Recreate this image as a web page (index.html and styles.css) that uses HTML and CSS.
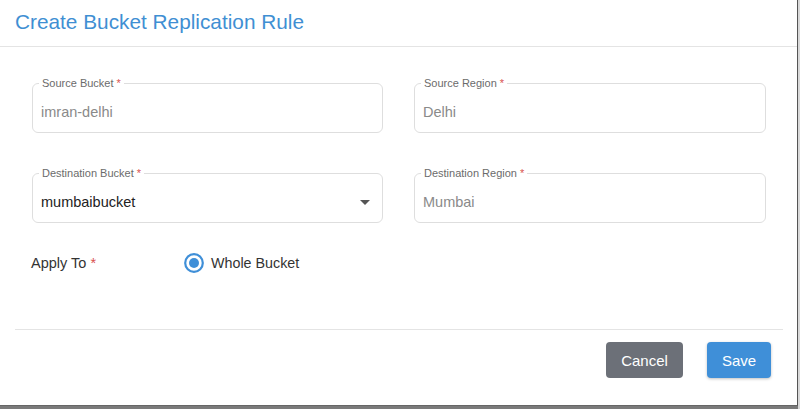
FILE: index.html
```html
<!DOCTYPE html>
<html>
<head>
<meta charset="utf-8">
<link rel="stylesheet" href="styles.css">
</head>
<body>
<div class="dialog">
  <div class="header"><h1 class="title">Create Bucket Replication Rule</h1></div>
  <div class="body">
    <div class="grid">
      <fieldset class="field">
        <legend>Source Bucket <span class="req">*</span></legend>
        <div class="value muted">imran-delhi</div>
      </fieldset>
      <fieldset class="field">
        <legend>Source Region <span class="req">*</span></legend>
        <div class="value muted">Delhi</div>
      </fieldset>
      <fieldset class="field">
        <legend>Destination Bucket <span class="req">*</span></legend>
        <div class="value select">
          <span>mumbaibucket</span>
          <svg class="caret" width="10" height="5" viewBox="0 0 10 5"><path d="M0 0h10L5 5z" fill="#555"/></svg>
        </div>
      </fieldset>
      <fieldset class="field">
        <legend>Destination Region <span class="req">*</span></legend>
        <div class="value muted">Mumbai</div>
      </fieldset>
    </div>
    <div class="apply">
      <div class="apply-label">Apply To <span class="req">*</span></div>
      <label class="radio">
        <svg width="20" height="20" viewBox="0 0 20 20"><circle cx="10" cy="10" r="8.8" fill="none" stroke="#3f8fd8" stroke-width="2.2"/><circle cx="10" cy="10" r="5" fill="#3f8fd8"/></svg>
        <span>Whole Bucket</span>
      </label>
    </div>
  </div>
  <div class="footer">
    <button class="btn cancel">Cancel</button>
    <button class="btn save">Save</button>
  </div>
</div>
</body>
</html>
```

FILE: styles.css
```css
html, body {
  margin: 0;
  padding: 0;
}
body {
  width: 800px;
  height: 409px;
  background: #d9d9d9;
  font-family: "Liberation Sans", Arial, sans-serif;
  overflow: hidden;
}
.dialog {
  width: 797px;
  height: 405px;
  background: #fff;
  border-right: 1px solid #555;
  border-bottom: 1px solid #666;
  box-shadow: 0 3px 0 #7a7a7a;
  display: flex;
  flex-direction: column;
}
.header {
  border-bottom: 1px solid #e4e4e4;
  padding: 10px 0 0 15px;
  box-sizing: border-box;
  height: 47px;
}
.title {
  margin: 0;
  font-size: 20.8px;
  line-height: 24px;
  font-weight: normal;
  color: #3f8fd3;
}
.body {
  padding: 30px 31px 0 32px;
  flex: 1;
}
.grid {
  display: grid;
  grid-template-columns: 351px 352px;
  column-gap: 31px;
  row-gap: 34px;
}
.field {
  margin: 0;
  padding: 0 9px 10px 8px;
  border: 1px solid #dedede;
  border-radius: 6px;
  min-width: 0;
}
.field legend {
  padding: 0 3px;
  margin-left: -2px;
  font-size: 11px;
  line-height: 12px;
  color: #6b6b6b;
}
.req {
  color: #d9534f;
}
.value {
  margin-top: 13px;
  font-size: 14.5px;
  line-height: 20px;
  color: #222;
}
.value.muted {
  color: #8a8a8a;
}
.value.select {
  display: flex;
  align-items: center;
  justify-content: space-between;
  padding-right: 3px;
}
.caret {
  display: block;
}
.apply {
  display: flex;
  align-items: center;
  margin-top: 28px;
  height: 24px;
}
.apply-label {
  width: 153px;
  margin-left: -1px;
  font-size: 14.5px;
  color: #333;
}
.radio {
  display: flex;
  align-items: center;
  gap: 7px;
  font-size: 14.3px;
  color: #333;
}
.radio svg {
  display: block;
}
.footer {
  margin: 0 14px 0 15px;
  border-top: 1px solid #e4e4e4;
  padding: 12px 12px 27px 0;
  display: flex;
  justify-content: flex-end;
  gap: 24px;
}
.btn {
  height: 36px;
  border: none;
  border-radius: 4px;
  color: #fff;
  font-family: "Liberation Sans", Arial, sans-serif;
  font-size: 15px;
  padding: 0;
}
.cancel {
  width: 77px;
  background: #6c7078;
}
.save {
  width: 64px;
  background: #3f8fd8;
  box-shadow: 0 1px 3px rgba(0,0,0,0.25);
}
```
